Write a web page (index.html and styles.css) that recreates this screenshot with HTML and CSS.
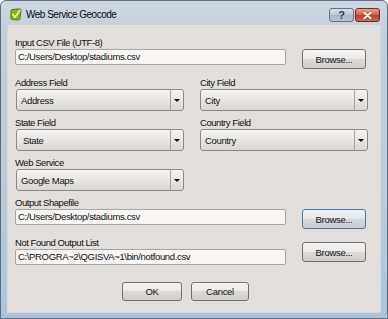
FILE: index.html
```html
<!DOCTYPE html>
<html lang="en">
  <head>
    <meta charset="UTF-8" />
    <title>Web Service Geocode</title>
    <link rel="stylesheet" href="styles.css">
  </head>
  <body>
    <div class="window">
      <div class="titlebar">
        <svg class="app-icon" width="12" height="13" viewBox="0 0 12 13">
          <path d="M2 1.5 L9.5 0.8 Q11.5 1 11 3 L10 10.5 Q9.6 12.2 8 12 L2.5 11.6 Q0.6 11.4 0.8 9.5 L1 3 Q1 1.6 2 1.5 Z" fill="#7fb51f" stroke="#3f6a10" stroke-width="0.8" />
          <path d="M2.8 6.5 L5 9.3 L9.8 2.6" fill="none" stroke="#e9f27a" stroke-width="1.8" stroke-linecap="round" stroke-linejoin="round" />
        </svg>
        <span class="title">Web Service Geocode</span>
        <div class="caption-buttons">
          <span class="cap-btn help">?</span>
          <span class="cap-btn close">
            <svg width="9" height="7" viewBox="0 0 9 7">
              <path d="M1.5 0.8 L7.5 6.2 M7.5 0.8 L1.5 6.2" stroke="#fff" stroke-width="1.8" stroke-linecap="round" />
            </svg>
          </span>
        </div>
      </div>

      <div class="client">
        <div class="file-row">
          <div class="file-col">
            <label class="field-label">Input CSV File (UTF-8)</label>
            <div class="text-input">C:/Users/Desktop/stadiums.csv</div>
          </div>
          <button class="btn browse">Browse...</button>
        </div>

        <div class="combo-grid">
          <div class="combo-cell">
            <label class="field-label">Address Field</label>
            <div class="combo"><span class="combo-text">Address</span><span class="combo-arrow"></span></div>
          </div>
          <div class="combo-cell">
            <label class="field-label">City Field</label>
            <div class="combo"><span class="combo-text">City</span><span class="combo-arrow"></span></div>
          </div>
          <div class="combo-cell">
            <label class="field-label">State Field</label>
            <div class="combo"><span class="combo-text indent">State</span><span class="combo-arrow"></span></div>
          </div>
          <div class="combo-cell">
            <label class="field-label">Country Field</label>
            <div class="combo"><span class="combo-text">Country</span><span class="combo-arrow"></span></div>
          </div>
          <div class="combo-cell">
            <label class="field-label">Web Service</label>
            <div class="combo"><span class="combo-text">Google Maps</span><span class="combo-arrow"></span></div>
          </div>
        </div>

        <div class="file-row">
          <div class="file-col">
            <label class="field-label">Output Shapefile</label>
            <div class="text-input">C:/Users/Desktop/stadiums.csv</div>
          </div>
          <button class="btn browse focused">Browse...</button>
        </div>

        <div class="file-row last">
          <div class="file-col">
            <label class="field-label">Not Found Output List</label>
            <div class="text-input">C:\PROGRA~2\QGISVA~1\bin/notfound.csv</div>
          </div>
          <button class="btn browse raised">Browse...</button>
        </div>

        <div class="dialog-buttons">
          <button class="btn ok">OK</button>
          <button class="btn cancel">Cancel</button>
        </div>
      </div>
    </div>
  </body>
</html>
```

FILE: styles.css
```css
html,
body {
  margin: 0;
  padding: 0;
}

body {
  width: 388px;
  height: 319px;
  overflow: hidden;
  background-color: #ffffff;
  font-family: "Liberation Sans", Arial, sans-serif;
  font-size: 9.5px;
  color: #111;
}

.window {
  box-sizing: border-box;
  width: 388px;
  height: 319px;
  border: 1px solid #5b6f80;
  border-radius: 6px 6px 0 0;
  background: linear-gradient(#cfd8e1, #c3cfdb 30px, #bccbd8 200px, #aac4dc);
  display: flex;
  flex-direction: column;
}

/* title bar */
.titlebar {
  height: 24px;
  display: flex;
  align-items: center;
  padding: 0 0 0 9px;
}

.app-icon {
  margin-top: 3px;
}

.title {
  margin-left: 4px;
  margin-top: 2px;
  font-size: 10px;
  letter-spacing: -0.5px;
  color: #0a0a0a;
}

.caption-buttons {
  margin-left: auto;
  margin-right: 7px;
  margin-top: 4px;
  display: flex;
  gap: 1px;
}

.cap-btn {
  box-sizing: border-box;
  width: 25px;
  height: 14px;
  border: 1px solid #5f7388;
  border-radius: 3px;
  display: flex;
  align-items: center;
  justify-content: center;
}

.help {
  background: linear-gradient(#d6e0ea, #b9c8d7 50%, #a5b8cb 50%, #b4c6d8);
  font-size: 11px;
  font-weight: bold;
  color: #2e3d4c;
}

.close {
  border-color: #6e2a22;
  background: linear-gradient(#e4a08f, #cf5f47 50%, #bc3b22 50%, #d06a4d);
}

/* dialog body */
.client {
  box-sizing: border-box;
  height: 288px;
  margin: 0 6px;
  padding: 12px 14px 0 7px;
  background-color: #e1dedb;
  border: 1px solid #d4d9df;
  border-top: 0;
}

.field-label {
  display: block;
  height: 12px;
  line-height: 12px;
  letter-spacing: -0.45px;
  white-space: nowrap;
}

.file-row {
  display: flex;
  gap: 16px;
  margin-bottom: 8px;
}

.file-row.last {
  margin-bottom: 17px;
}

.file-col {
  flex: 1;
}

.text-input {
  box-sizing: border-box;
  height: 16px;
  line-height: 14px;
  padding: 0 2px;
  border: 1px solid #a9a6a2;
  border-radius: 2px;
  background-color: #f8f7f5;
  letter-spacing: -0.35px;
  white-space: nowrap;
  overflow: hidden;
}

.btn {
  box-sizing: border-box;
  height: 20px;
  padding: 0;
  border: 1px solid #737170;
  border-radius: 3px;
  background: linear-gradient(#f4f3f2, #eae9e7 50%, #dcdad7 50%, #d0cecb);
  font-family: inherit;
  font-size: 9.5px;
  color: #111;
  letter-spacing: -0.3px;
}

.browse {
  width: 64px;
  margin-top: 12px;
}

.browse.focused {
  border-color: #4d78a0;
  background: linear-gradient(#eef0f3, #e3e6ea 50%, #d3d8de 50%, #c8ced5);
}

.browse.raised {
  margin-top: 5px;
}

.combo-grid {
  display: grid;
  grid-template-columns: 169px 168px;
  column-gap: 16px;
  row-gap: 6px;
  margin-bottom: 6px;
}

.combo {
  box-sizing: border-box;
  height: 22px;
  margin-left: 1px;
  border: 1px solid #8e8b87;
  border-radius: 3px;
  background: linear-gradient(#f3f2f0, #e8e6e3 50%, #d9d6d1);
  display: flex;
  align-items: center;
}

.combo-grid .combo-cell:nth-child(even) .combo {
  margin-left: 0;
}

.combo-text {
  flex: 1;
  padding-left: 4px;
  letter-spacing: -0.35px;
}

.combo-text.indent {
  padding-left: 6px;
}

.combo-arrow {
  width: 12px;
  height: 100%;
  border-left: 1px solid #a8a5a0;
  display: flex;
  align-items: center;
  justify-content: center;
}

.combo-arrow:after {
  content: "";
  width: 0;
  height: 0;
  border-left: 3px solid transparent;
  border-right: 3px solid transparent;
  border-top: 3px solid #111;
}

.dialog-buttons {
  display: flex;
  justify-content: center;
  gap: 9px;
  margin-right: 10px;
}

.ok {
  width: 60px;
  height: 19px;
}

.cancel {
  width: 58px;
  height: 19px;
}
```
